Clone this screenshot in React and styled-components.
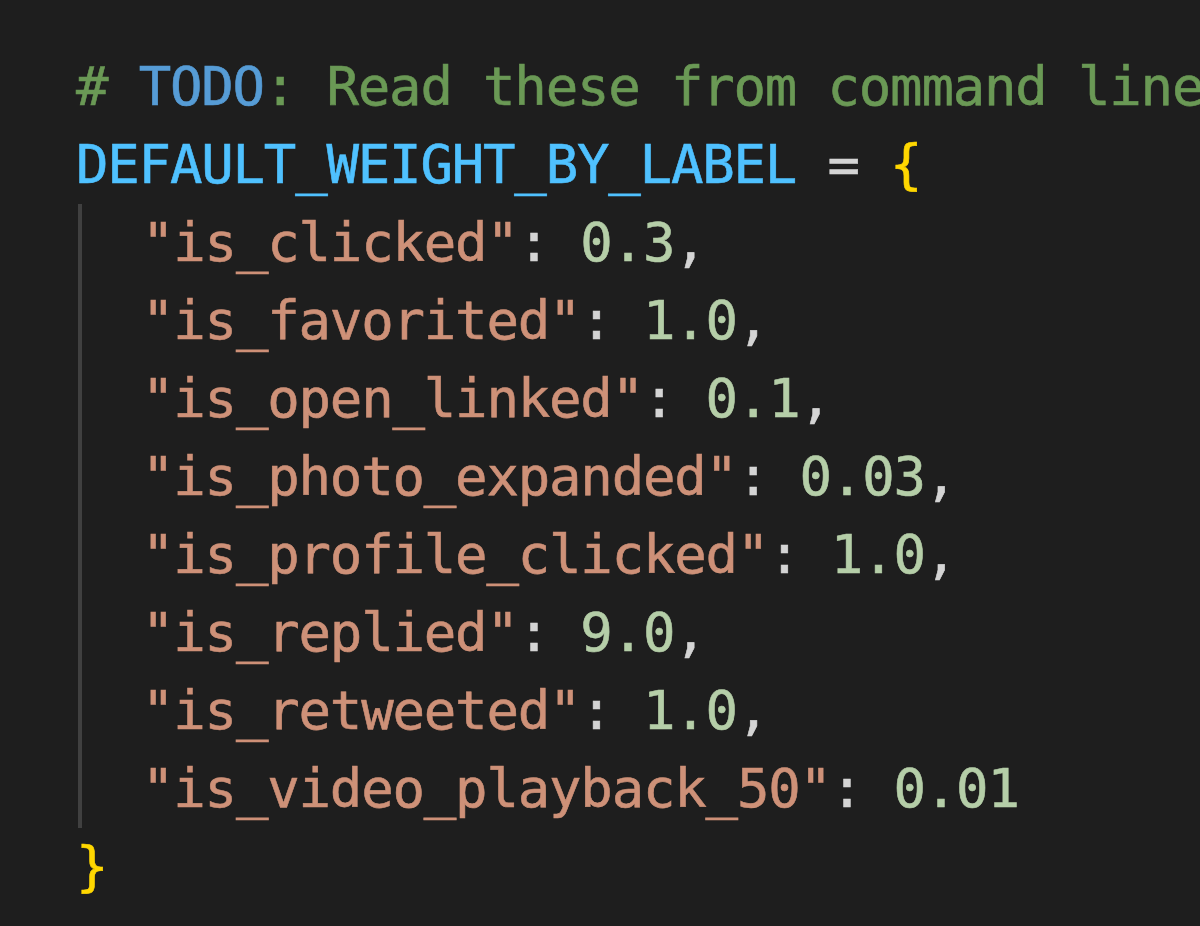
import React from "react";
import styled, { createGlobalStyle } from "styled-components";

const GlobalStyle = createGlobalStyle`
  html, body {
    margin: 0;
    padding: 0;
    background: #1e1e1e;
  }
`;

const entries = [
  ["is_clicked", "0.3"],
  ["is_favorited", "1.0"],
  ["is_open_linked", "0.1"],
  ["is_photo_expanded", "0.03"],
  ["is_profile_clicked", "1.0"],
  ["is_replied", "9.0"],
  ["is_retweeted", "1.0"],
  ["is_video_playback_50", "0.01"],
];

const colors = {
  comment: "#6a9955",
  keyword: "#569cd6",
  constant: "#4fc1ff",
  text: "#d4d4d4",
  string: "#ce9178",
  number: "#b5cea8",
  brace: "#ffd700",
};

const App = () => {
  return (
    <>
      <GlobalStyle />
      <Editor>
        <Line>
          <Token $c="comment"># </Token>
          <Token $c="keyword">TODO</Token>
          <Token $c="comment">: Read these from command line</Token>
        </Line>
        <Line>
          <Token $c="constant">DEFAULT_WEIGHT_BY_LABEL</Token>
          <Token $c="text"> = </Token>
          <Token $c="brace">{"{"}</Token>
        </Line>
        <Block>
          {entries.map(([key, value], i) => (
            <Line key={key}>
              <Token $c="string">"{key}"</Token>
              <Token $c="text">: </Token>
              <Token $c="number">{value}</Token>
              {i < entries.length - 1 && <Token $c="text">,</Token>}
            </Line>
          ))}
        </Block>
        <Line>
          <Token $c="brace">{"}"}</Token>
        </Line>
      </Editor>
    </>
  );
};

export default App;

const Editor = styled.div`
  width: 1200px;
  height: 926px;
  box-sizing: border-box;
  padding: 48px 0 0 76px;
  overflow: hidden;
  background: #1e1e1e;
  font-family: "DejaVu Sans Mono", "Liberation Mono", monospace;
  font-size: 54px;
  letter-spacing: -1.2px;
  line-height: 78px;
`;

const Line = styled.div`
  height: 78px;
  white-space: pre;
`;

const Token = styled.span`
  color: ${(props) => colors[props.$c]};
  -webkit-text-stroke: 0.6px ${(props) => colors[props.$c]};
`;

const Block = styled.div`
  margin-left: 2px;
  padding-left: 60px;
  border-left: 4px solid #404040;
`;
